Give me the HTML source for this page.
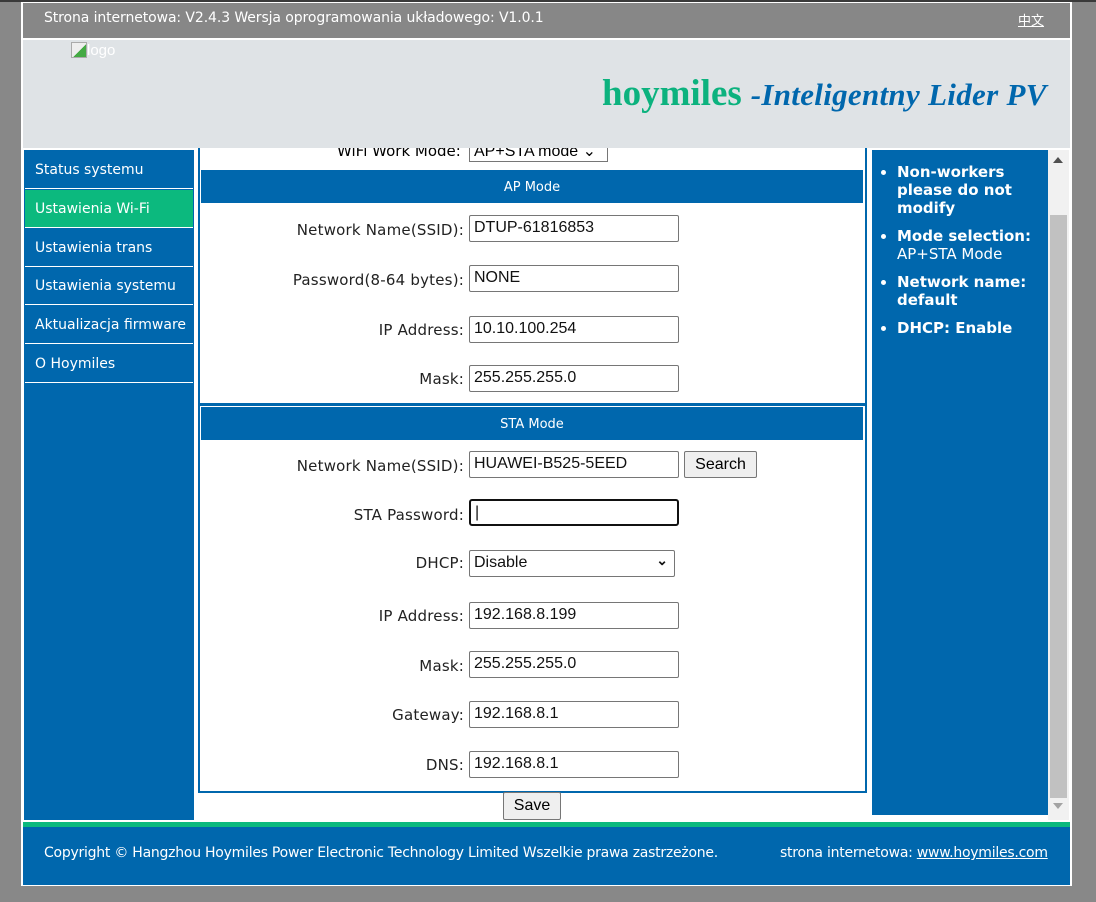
<!DOCTYPE html>
<html><head><meta charset="utf-8"><style>
*{margin:0;padding:0;box-sizing:border-box}
body{width:1096px;height:902px;background:#888;position:relative;overflow:hidden;font-family:"DejaVu Sans","Liberation Sans",sans-serif}
.a{position:absolute}
.lbl{position:absolute;right:632px;font-size:15px;color:#222;font-family:"DejaVu Sans",sans-serif;letter-spacing:0.2px}
.inp{position:absolute;left:469px;width:210px;height:27px;border:1px solid #767676;border-radius:2px;background:#fff;font-family:"Liberation Sans",sans-serif;font-size:16px;padding:3px 4px 0;color:#111}
.nav{position:absolute;left:25px;width:168px;height:38px;color:#fff;font-size:14px;padding-left:10px;line-height:39px;border-bottom:1px solid #fff}
.bar{position:absolute;left:201px;width:662px;height:33px;background:#0067ad;color:#fff;font-size:13px;text-align:center;line-height:35px}
</style></head><body>
<div class="a" style="left:0;top:0;width:1096px;height:2px;background:#3a3a3a"></div>
<div class="a" style="left:21px;top:2px;width:1051px;height:884px;background:#fff"></div>
<div class="a" style="left:23px;top:3px;width:1047px;height:35px;background:#878787"></div>
<div class="a" style="left:44px;top:10px;color:#fff;font-size:14px;letter-spacing:-0.1px">Strona internetowa: V2.4.3 Wersja oprogramowania układowego: V1.0.1</div>
<div class="a" style="left:1018px;top:10px;color:#fff;font-size:13px;text-decoration:underline;font-family:'Noto Sans CJK SC',sans-serif">中文</div>
<div class="a" style="left:23px;top:40px;width:1047px;height:108px;background:#dfe3e6"></div>
<div class="a" style="left:71px;top:42px;font-size:15px;color:#fff;font-family:'Liberation Sans',sans-serif"><span style="display:inline-block;width:16px;height:16px;border:1px solid #aaa;vertical-align:-3px;background:linear-gradient(135deg,#eee 55%,#4a4 55%)"></span>logo</div>
<div class="a" style="left:602px;top:72px;font-family:'Liberation Serif',serif;font-weight:bold;white-space:nowrap"><span style="color:#0cb27e;font-size:37px">hoymiles</span><span style="color:#0067ad;font-size:31px;font-style:italic;margin-left:9px;letter-spacing:0.3px">-Inteligentny Lider PV</span></div>

<div class="a" style="left:24px;top:150px;width:170px;height:670px;background:#0067ad"></div>
<div class="nav" style="top:151px">Status systemu</div>
<div class="nav" style="top:190px;background:#0cb97e">Ustawienia Wi-Fi</div>
<div class="nav" style="top:229px">Ustawienia trans</div>
<div class="nav" style="top:267px">Ustawienia systemu</div>
<div class="nav" style="top:306px">Aktualizacja firmware</div>
<div class="nav" style="top:345px">O Hoymiles</div>

<div class="a" style="left:198px;top:148px;width:669px;height:645px;border:2px solid #0067ad;border-top:none"></div>
<div class="a" style="left:198px;top:403px;width:669px;height:3px;background:#0067ad"></div>
<div class="a" style="left:200px;top:148px;width:665px;height:14px;overflow:hidden">
<div class="a" style="left:137px;top:-6px;font-size:15px;white-space:nowrap">WiFi Work Mode:</div>
<div class="a" style="left:269px;top:-10px;width:139px;height:24px;border:1px solid #767676;font-size:16px;font-family:'Liberation Sans',sans-serif;padding-left:4px;padding-top:2px">AP+STA mode ⌄</div>
</div>
<div class="bar" style="top:170px">AP Mode</div>
<div class="lbl" style="top:221px">Network Name(SSID):</div><div class="inp" style="top:215px">DTUP-61816853</div>
<div class="lbl" style="top:271px">Password(8-64 bytes):</div><div class="inp" style="top:265px">NONE</div>
<div class="lbl" style="top:321px">IP Address:</div><div class="inp" style="top:316px">10.10.100.254</div>
<div class="lbl" style="top:370px">Mask:</div><div class="inp" style="top:365px">255.255.255.0</div>
<div class="bar" style="top:407px">STA Mode</div>
<div class="lbl" style="top:457px">Network Name(SSID):</div><div class="inp" style="top:451px">HUAWEI-B525-5EED</div>
<div class="a" style="left:684px;top:451px;width:73px;height:27px;border:1px solid #767676;border-radius:2px;background:#efefef;font-family:'Liberation Sans',sans-serif;font-size:16px;text-align:center;line-height:25px">Search</div>
<div class="lbl" style="top:506px">STA Password:</div><div class="inp" style="top:499px;border:2px solid #111;border-radius:3px">|</div>
<div class="lbl" style="top:554px">DHCP:</div><div class="inp" style="top:550px;width:206px">Disable<span style="position:absolute;right:6px;top:1px;font-weight:bold;font-size:14px">⌄</span></div>
<div class="lbl" style="top:607px">IP Address:</div><div class="inp" style="top:602px">192.168.8.199</div>
<div class="lbl" style="top:657px">Mask:</div><div class="inp" style="top:651px">255.255.255.0</div>
<div class="lbl" style="top:706px">Gateway:</div><div class="inp" style="top:701px">192.168.8.1</div>
<div class="lbl" style="top:756px">DNS:</div><div class="inp" style="top:751px">192.168.8.1</div>
<div class="a" style="left:503px;top:792px;width:58px;height:28px;border:1px solid #767676;border-radius:2px;background:#efefef;font-family:'Liberation Sans',sans-serif;font-size:16px;text-align:center;line-height:26px">Save</div>

<div class="a" style="left:872px;top:150px;width:176px;height:665px;background:#0067ad;color:#fff;font-size:15px;line-height:18px">
<ul style="padding-left:25px;margin-top:13px;list-style:disc">
<li style="font-weight:bold;margin-bottom:10px">Non-workers please do not modify</li>
<li style="margin-bottom:10px"><b>Mode selection:</b> AP+STA Mode</li>
<li style="font-weight:bold;margin-bottom:10px">Network name: default</li>
<li style="font-weight:bold">DHCP: Enable</li></ul></div>
<div class="a" style="left:1048px;top:150px;width:21px;height:670px;background:#f1f1f1"></div>
<div class="a" style="left:1050px;top:215px;width:17px;height:583px;background:#c1c1c1"></div>
<div class="a" style="left:1053px;top:157px;width:0;height:0;border-left:5px solid transparent;border-right:5px solid transparent;border-bottom:6px solid #505050"></div>
<div class="a" style="left:1053px;top:803px;width:0;height:0;border-left:5px solid transparent;border-right:5px solid transparent;border-top:6px solid #a3a3a3"></div>

<div class="a" style="left:23px;top:822px;width:1047px;height:5px;background:#0cb97e"></div>
<div class="a" style="left:23px;top:827px;width:1047px;height:58px;background:#0067ad"></div>
<div class="a" style="left:44px;top:845px;color:#fff;font-size:14px;letter-spacing:-0.25px;white-space:nowrap">Copyright © Hangzhou Hoymiles Power Electronic Technology Limited Wszelkie prawa zastrzeżone.</div>
<div class="a" style="left:780px;top:845px;color:#fff;font-size:14px;letter-spacing:-0.25px;white-space:nowrap">strona internetowa: <u>www.hoymiles.com</u></div>
</body></html>
